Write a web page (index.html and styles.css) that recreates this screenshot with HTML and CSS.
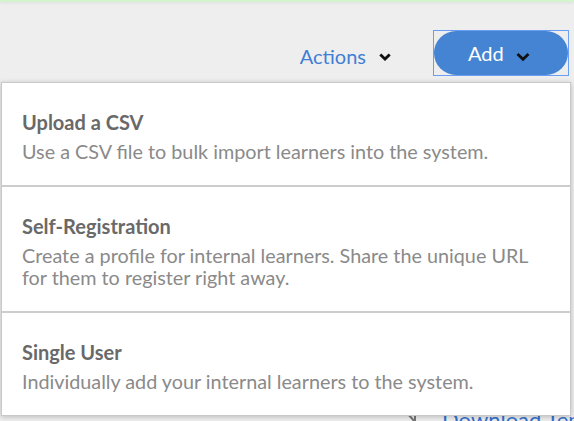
FILE: index.html
```html
<!DOCTYPE html>
<html lang="en">
<head>
<meta charset="utf-8">
<title>Add learners</title>
<link rel="stylesheet" href="styles.css">
</head>
<body>
<div class="topbar"></div>
<header class="toolbar">
  <button class="actions" type="button">
    <span>Actions</span>
    <svg class="chev" width="12" height="24" viewBox="0 0 12 24"><path d="M1.3 10.4 L6 15.1 L10.7 10.4" fill="none" stroke="#111" stroke-width="2.8"/></svg>
  </button>
  <div class="add-focus">
    <button class="add" type="button">
      <span>Add</span>
      <svg class="chev" width="14" height="24" viewBox="0 0 14 24"><path d="M1.5 13 L7 18.3 L12.5 13" fill="none" stroke="#111" stroke-width="2.8"/></svg>
    </button>
  </div>
</header>
<main class="page">
  <div class="template-row">
    <svg class="dl-icon" width="22" height="20" viewBox="0 0 22 20"><path d="M4 4 L11 12 M11 12 V5 M11 12 H4" fill="none" stroke="#777" stroke-width="2"/></svg>
    <a class="template-link" href="#">Download Template</a>
  </div>
</main>
<div class="menu">
  <div class="item">
    <div class="item-title">Upload a CSV</div>
    <div class="item-desc">Use a CSV file to bulk import learners into the system.</div>
  </div>
  <div class="item">
    <div class="item-title">Self-Registration</div>
    <div class="item-desc">Create a profile for internal learners. Share the unique URL for them to register right away.</div>
  </div>
  <div class="item">
    <div class="item-title">Single User</div>
    <div class="item-desc">Individually add your internal learners to the system.</div>
  </div>
</div>
</body>
</html>
```
FILE: styles.css
```css
* { box-sizing: border-box; }
html, body { margin: 0; padding: 0; }
body {
  background: #eeeeee;
  font-family: Lato, "Open Sans", sans-serif;
  width: 574px;
  height: 421px;
  overflow: hidden;
  position: relative;
}
.topbar {
  height: 2px;
  background: #d4f4cd;
  box-shadow: 0 1px 3px rgba(0,0,0,0.08);
}
.toolbar {
  display: flex;
  justify-content: flex-end;
  align-items: flex-start;
  padding: 28px 5px 0 0;
}
.actions {
  display: flex;
  align-items: flex-start;
  background: none;
  border: 0;
  padding: 14px 0 0 0;
  margin: 0 42px 0 0;
  font-family: inherit;
  font-size: 20px;
  line-height: 24px;
  color: #3f7fd6;
  cursor: pointer;
}
.actions .chev { margin-left: 13px; display: block; }
.add-focus {
  border: 1px solid #6a9ef4;
  display: flex;
}
.add {
  display: flex;
  align-items: center;
  width: 134px;
  height: 44px;
  padding: 0 0 0 34px;
  border: 0;
  border-radius: 22px;
  background: #4584d3;
  color: #ffffff;
  font-family: inherit;
  font-size: 20px;
  line-height: 24px;
  cursor: pointer;
}
.add .chev { margin-left: 12px; display: block; }
.page {
  padding: 330px 0 0 404px;
}
.template-row {
  display: flex;
  align-items: center;
  gap: 16px;
  white-space: nowrap;
}
.dl-icon { display: block; flex: none; }
.template-link {
  font-size: 22px;
  line-height: 28px;
  color: #3370cf;
  text-decoration: underline;
  white-space: nowrap;
}
.menu {
  position: absolute;
  left: 1px;
  top: 82px;
  width: 570px;
  background: #ffffff;
  border: 1px solid #c9c9c9;
  box-shadow: 0 1px 5px rgba(0,0,0,0.22);
}
.item {
  padding: 27px 19px 23px 20px;
}
.item + .item {
  border-top: 2px solid #cdcdcd;
}
.item-title {
  font-weight: 700;
  font-size: 20px;
  line-height: 24px;
  color: #696969;
}
.item-desc {
  margin-top: 6px;
  font-size: 19.8px;
  line-height: 22px;
  color: #8a8a8a;
}
```
